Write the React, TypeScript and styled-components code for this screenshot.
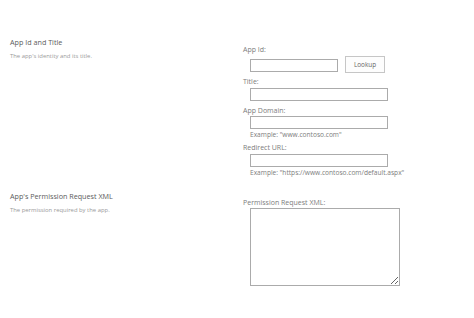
import React from "react";
import styled, { createGlobalStyle } from "styled-components";

const GlobalStyle = createGlobalStyle`
  html, body {
    margin: 0;
    padding: 0;
    background: #ffffff;
  }
  body {
    font-family: "Open Sans", "Noto Sans", "Liberation Sans", sans-serif;
    color: #555555;
  }
`;

const Page = styled.div`
  width: 474px;
  height: 318px;
  box-sizing: border-box;
  padding-left: 10px;
`;

const Section = styled.div<{ top: number }>`
  display: grid;
  grid-template-columns: 233px 1fr;
  padding-top: ${(p) => p.top}px;
`;

const Intro = styled.div`
  display: flex;
  flex-direction: column;
`;

const Heading = styled.div`
  font-size: 7.2px;
  line-height: 10px;
  color: #5c5c5c;
`;

const Desc = styled.div`
  font-size: 5.9px;
  line-height: 8px;
  color: #9a9a9a;
  margin-top: 5px;
`;

const Fields = styled.div`
  display: flex;
  flex-direction: column;
`;

const Label = styled.div<{ gap?: number }>`
  font-size: 7px;
  line-height: 10px;
  color: #7c7c7c;
  margin-top: ${(p) => p.gap || 0}px;
`;

const Control = styled.div<{ gap?: number }>`
  display: flex;
  align-items: flex-end;
  gap: 7px;
  padding-left: 7px;
  margin-top: ${(p) => p.gap || 0}px;
`;

const TextBox = styled.input<{ w: number; lift?: number }>`
  box-sizing: border-box;
  width: ${(p) => p.w}px;
  height: 13px;
  margin: 0 0 ${(p) => p.lift || 0}px 0;
  padding: 0 3px;
  border: 1px solid #ababab;
  background: #ffffff;
  outline: none;
`;

const LookupButton = styled.button`
  box-sizing: border-box;
  width: 40px;
  height: 17px;
  margin: 0;
  padding: 0;
  border: 1px solid #c6c6c6;
  background: #fdfdfd;
  font-family: "Open Sans", "Noto Sans", sans-serif;
  font-size: 6.4px;
  color: #666666;
`;

const Hint = styled.div`
  font-size: 6.6px;
  line-height: 10px;
  color: #7c7c7c;
  padding-left: 7px;
  margin-top: 1px;
`;

const XmlArea = styled.textarea`
  box-sizing: border-box;
  width: 150px;
  height: 78px;
  margin: 0;
  padding: 2px;
  border: 1px solid #ababab;
  resize: both;
  background: #ffffff;
  outline: none;
`;

export default function App() {
  return (
    <>
      <GlobalStyle />
      <Page>
        <Section top={37}>
          <Intro>
            <Heading>App Id and Title</Heading>
            <Desc>The app's identity and its title.</Desc>
          </Intro>
          <Fields>
            <Label gap={8}>App Id:</Label>
            <Control gap={1}>
              <TextBox w={88} lift={1} />
              <LookupButton>Lookup</LookupButton>
            </Control>
            <Label gap={4}>Title:</Label>
            <Control gap={1}>
              <TextBox w={138} />
            </Control>
            <Label gap={5}>App Domain:</Label>
            <Control gap={0}>
              <TextBox w={138} />
            </Control>
            <Hint>Example: "www.contoso.com"</Hint>
            <Label gap={3}>Redirect URL:</Label>
            <Control gap={1}>
              <TextBox w={138} />
            </Control>
            <Hint>Example: "https://www.contoso.com/default.aspx"</Hint>
          </Fields>
        </Section>
        <Section top={13}>
          <Intro>
            <Heading>App's Permission Request XML</Heading>
            <Desc>The permission required by the app.</Desc>
          </Intro>
          <Fields>
            <Label gap={7}>Permission Request XML:</Label>
            <Control gap={0}>
              <XmlArea />
            </Control>
          </Fields>
        </Section>
      </Page>
    </>
  );
}
